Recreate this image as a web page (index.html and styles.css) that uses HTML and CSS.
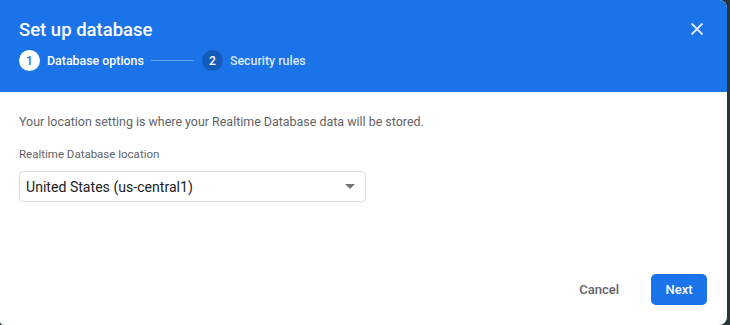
FILE: index.html
```html
<!DOCTYPE html>
<html lang="en">
<head>
    <meta charset="UTF-8">
    <title>Set up database</title>
    <link rel="stylesheet" href="styles.css">
</head>
<body>
    <div class="dialog">
        <header class="dialog-header">
            <div class="title-row">
                <h1 class="title">Set up database</h1>
                <button class="close" aria-label="Close">
                    <svg width="14" height="14" viewBox="0 0 14 14">
                        <path d="M1.5 1.5L12.5 12.5M12.5 1.5L1.5 12.5" stroke="#fff" stroke-width="1.8" fill="none"/>
                    </svg>
                </button>
            </div>
            <div class="stepper">
                <div class="step active">
                    <span class="step-num">1</span>
                    <span class="step-label">Database options</span>
                </div>
                <span class="step-line"></span>
                <div class="step">
                    <span class="step-num">2</span>
                    <span class="step-label">Security rules</span>
                </div>
            </div>
        </header>

        <section class="dialog-body">
            <p class="intro">Your location setting is where your Realtime Database data will be stored.</p>
            <label class="field-label" for="location">Realtime Database location</label>
            <div class="select">
                <span id="location">United States (us-central1)</span>
                <span class="arrow"></span>
            </div>
        </section>

        <footer class="dialog-footer">
            <button class="btn text">Cancel</button>
            <button class="btn primary">Next</button>
        </footer>
    </div>
</body>
</html>
```

FILE: styles.css
```css
* {
    box-sizing: border-box;
    font-family: Roboto, "Liberation Sans", sans-serif;
}

body {
    margin: 0;
    background-color: #263535;
    height: 325px;
    overflow: hidden;
}

.dialog {
    width: 727px;
    height: 325px;
    background-color: #fff;
    border-radius: 0 8px 8px 4px;
    overflow: hidden;
    display: flex;
    flex-direction: column;
}

.dialog-header {
    background-color: #1a73e8;
    height: 92px;
    padding: 17px 23px 0 19px;
    color: #fff;
}

.title-row {
    display: flex;
    justify-content: space-between;
    align-items: center;
}

.title {
    margin: 0;
    font-size: 18.5px;
    font-weight: 500;
    line-height: 26px;
}

.close {
    background: none;
    border: none;
    padding: 0;
    width: 14px;
    height: 14px;
    cursor: pointer;
    display: flex;
    opacity: 0.85;
    margin-top: -3px;
}

.stepper {
    display: flex;
    align-items: center;
    margin-top: 7px;
}

.step {
    display: flex;
    align-items: center;
    gap: 7px;
}

.step-num {
    width: 21px;
    height: 21px;
    border-radius: 50%;
    background-color: rgba(0, 0, 0, 0.2);
    color: #fff;
    font-size: 12px;
    font-weight: 500;
    display: flex;
    align-items: center;
    justify-content: center;
}

.step.active .step-num {
    background-color: #fff;
    color: #1a73e8;
}

.step-label {
    font-size: 12.4px;
    font-weight: 500;
    color: rgba(255, 255, 255, 0.85);
}

.step.active .step-label {
    color: #fff;
}

.step-line {
    width: 43px;
    height: 1px;
    background-color: rgba(255, 255, 255, 0.35);
    margin: 0 8px 0 7px;
}

.dialog-body {
    flex: 1;
    padding: 21px 19px 0;
}

.intro {
    margin: 0 0 16px;
    font-size: 12.45px;
    color: #5f6368;
    line-height: 18px;
}

.field-label {
    display: block;
    font-size: 11.5px;
    color: #5f6368;
    margin-bottom: 10px;
}

.select {
    width: 347px;
    height: 31px;
    border: 1px solid #dadce0;
    border-radius: 4px;
    display: flex;
    align-items: center;
    justify-content: space-between;
    padding: 0 10px 0 6px;
    font-size: 14.1px;
    color: #202124;
}

.arrow {
    width: 0;
    height: 0;
    border-left: 5px solid transparent;
    border-right: 5px solid transparent;
    border-top: 5px solid #757575;
}

.dialog-footer {
    display: flex;
    justify-content: flex-end;
    align-items: center;
    gap: 16px;
    padding: 0 20px 20px;
}

.btn {
    border: none;
    font-size: 13px;
    font-weight: 500;
    height: 31px;
    border-radius: 5px;
    cursor: pointer;
}

.btn.text {
    background: none;
    color: #5f6368;
    padding: 0 16px;
}

.btn.primary {
    background-color: #1a73e8;
    color: #fff;
    width: 56px;
}
```
